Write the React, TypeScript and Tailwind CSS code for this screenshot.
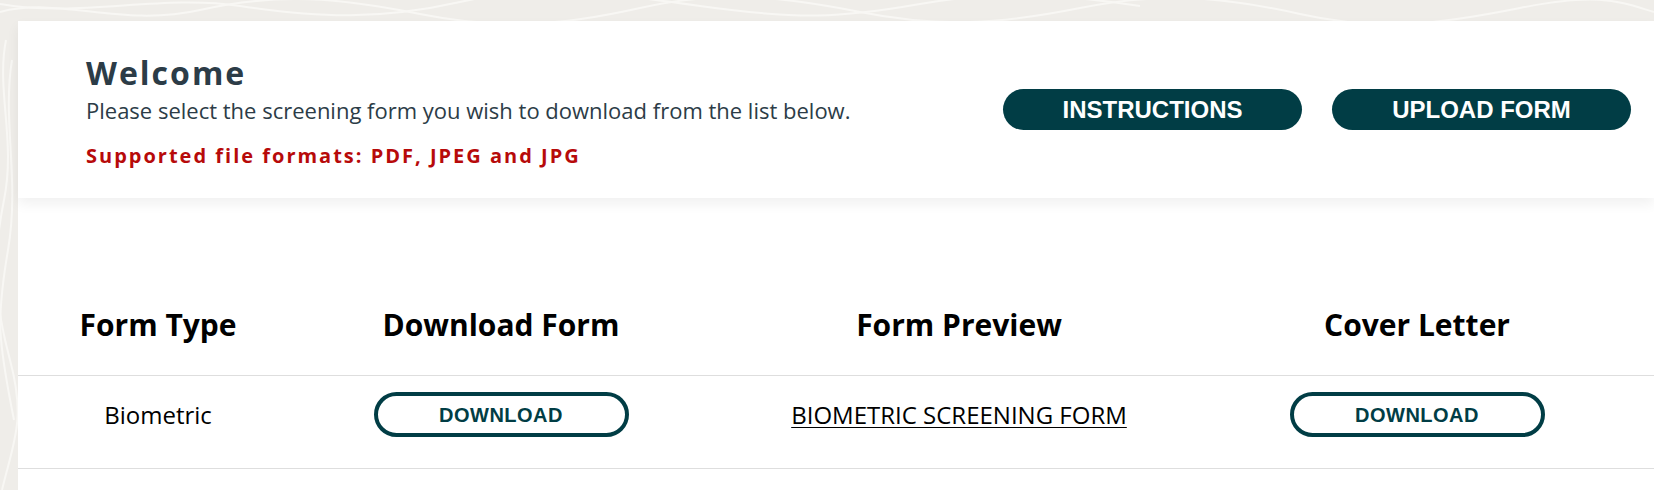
import React from "react";

function OutlineButton() {
  return (
    <button className="h-[45px] w-[255px] rounded-full border-[4px] border-[#013d45] bg-white text-[20px] font-bold tracking-[0.5px] text-[#013d45] [font-family:'Liberation_Sans',Arial,sans-serif]">
      DOWNLOAD
    </button>
  );
}

function SolidButton({ label }: { label: string }) {
  return (
    <button className="flex h-[41px] w-[299px] items-center justify-center rounded-full bg-[#013d45] text-[24px] font-bold text-white [font-family:'Liberation_Sans',Arial,sans-serif]">
      {label}
    </button>
  );
}

export default function App() {
  return (
    <div className="relative h-[490px] w-[1654px] overflow-hidden bg-[#efede9] pl-[18px] pt-[21px] [font-family:'Open_Sans',sans-serif]">
      <svg className="pointer-events-none absolute inset-0" width="1654" height="490" aria-hidden="true">
        <g fill="none" stroke="#f8f7f4" strokeWidth="2">
          <path d="M0 12 C 60 -4, 120 28, 200 10 S 340 -2, 420 14 S 560 26, 640 8 S 780 -4, 860 12 S 1000 24, 1080 8 S 1220 -4, 1300 14 S 1440 24, 1520 8 S 1620 2, 1654 12" />
          <path d="M0 4 C 80 18, 160 -6, 240 6 S 380 20, 460 2 S 600 -8, 700 6 S 840 18, 920 4 S 1060 -6, 1140 6" />
          <path d="M6 40 C -4 90, 16 140, 4 200 S -6 300, 10 360 S 14 440, 2 490" />
          <path d="M12 60 C 2 120, 20 180, 8 250 S -2 340, 14 420" />
        </g>
      </svg>
      <div className="relative h-full w-full bg-white">
        <div className="relative z-10 flex h-[177px] items-center justify-between bg-white pr-[23px] shadow-[0_6px_12px_rgba(0,0,0,0.06)]">
          <div className="self-start pl-[68px] pt-[32px]">
            <h1 className="text-[32px] font-bold leading-[40px] tracking-[2px] text-[#2c3c47]">Welcome</h1>
            <p className="mt-[3px] text-[22px] leading-[28px] text-[#2c3c47]">
              Please select the screening form you wish to download from the list below.
            </p>
            <p className="mt-[19px] text-[20px] font-bold leading-[26px] tracking-[2px] text-[#b70a0a]">
              Supported file formats: PDF, JPEG and JPG
            </p>
          </div>
          <div className="flex gap-[30px]">
            <SolidButton label="INSTRUCTIONS" />
            <SolidButton label="UPLOAD FORM" />
          </div>
        </div>

        <div className="pt-[109px]">
          <div className="border-b border-[#dedede] pb-[32px] pl-[26px]">
            <div className="grid grid-cols-[228px_458px_458px_458px] text-center text-[30px] font-bold leading-[36px] text-black">
              <div>Form Type</div>
              <div>Download Form</div>
              <div>Form Preview</div>
              <div>Cover Letter</div>
            </div>
          </div>
          <div className="border-b border-[#dedede] pb-[31px] pl-[26px] pt-[16px]">
            <div className="grid grid-cols-[228px_458px_458px_458px] items-center text-center text-[24px] text-black">
              <div>Biometric</div>
              <div className="flex justify-center">
                <OutlineButton />
              </div>
              <div>
                <a href="#" className="underline decoration-1 underline-offset-[3px]">
                  BIOMETRIC SCREENING FORM
                </a>
              </div>
              <div className="flex justify-center">
                <OutlineButton />
              </div>
            </div>
          </div>
        </div>
      </div>
    </div>
  );
}
